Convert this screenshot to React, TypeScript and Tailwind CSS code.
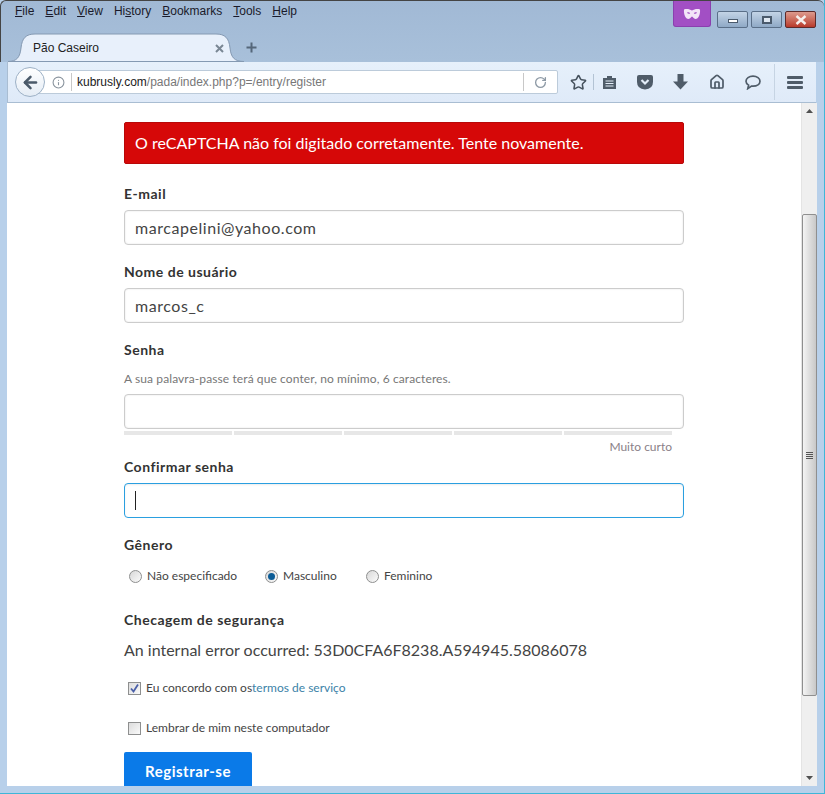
import { ArrowLeft, Info, RotateCw, Star, House } from "lucide-react";

const menu = [
  ["F", "ile"],
  ["E", "dit"],
  ["V", "iew"],
  ["Hi", "story", "s"],
  ["B", "ookmarks"],
  ["T", "ools"],
  ["H", "elp"],
];

function MenuItem({ item }: { item: string[] }) {
  if (item.length === 3) {
    return (
      <span>
        Hi<span className="underline">s</span>tory
      </span>
    );
  }
  return (
    <span>
      <span className="underline">{item[0]}</span>
      {item[1]}
    </span>
  );
}

function Label({ children }: { children: React.ReactNode }) {
  return <div className="text-[14px] leading-[20px] font-bold tracking-[0.5px] text-[#333]">{children}</div>;
}

function Field({ value, focused }: { value?: string; focused?: boolean }) {
  return (
    <div
      className={
        "h-[35px] rounded-[4px] border bg-white px-[10px] text-[16px] leading-[33px] tracking-[0.55px] text-[#444] " +
        (focused ? "border-[#2a9fe0] shadow-[inset_0_1px_2px_rgba(0,0,0,0.08)]" : "border-[#ccc] shadow-[inset_0_0_2px_rgba(0,0,0,0.12)]")
      }
    >
      {value}
      {focused && <span className="mt-[7px] block h-[19px] w-px bg-[#222]" />}
    </div>
  );
}

function Radio({ checked, label, width }: { checked?: boolean; label: string; width: string }) {
  return (
    <div className={"flex items-center " + width}>
      <span
        className={
          "flex h-[13px] w-[13px] items-center justify-center rounded-full border border-[#8e8f8f] bg-gradient-to-br from-[#d8d8d8] to-[#fbfbfb]"
        }
      >
        {checked && <span className="h-[7px] w-[7px] rounded-full bg-[#0c5c96]" />}
      </span>
      <span className="ml-[5px] text-[12px] leading-[16px] text-[#444]">{label}</span>
    </div>
  );
}

function Checkbox({ checked }: { checked?: boolean }) {
  return (
    <span className="flex h-[13px] w-[13px] items-center justify-center border border-[#8e8f8f] bg-gradient-to-br from-[#dcdcdc] to-[#fafafa]">
      {checked && (
        <svg width="11" height="11" viewBox="0 0 11 11">
          <path d="M2 5.5 L4.5 8.5 L9 1.5" fill="none" stroke="#4a5fa8" strokeWidth="1.8" />
        </svg>
      )}
    </span>
  );
}

export default function App() {
  return (
    <div className="flex h-[794px] w-[825px] flex-col overflow-hidden bg-[#b8d0ea] font-['Lato',sans-serif] border-r border-b border-[#3fb6d8]">
      {/* title + menu */}
      <div className="relative h-[62px] shrink-0 rounded-t-[6px] bg-gradient-to-b from-[#a1b9d5] to-[#a8c0da] border-t border-l border-[#444]">
        <div className="flex gap-[11px] pl-[14px] pt-[1px] font-['Liberation_Sans',sans-serif] text-[12px] leading-[18px] text-[#1a1a2a]">
          {menu.map((m) => (
            <MenuItem key={m[0]} item={m} />
          ))}
        </div>
        <div className="absolute right-[8px] top-0 flex items-start">
          <div className="mr-[6px] flex h-[26px] w-[38px] items-center justify-center rounded-b-[3px] bg-[#a24fc4] border border-t-0 border-[#8a3fae]">
            <svg width="18" height="12" viewBox="0 0 18 12">
              <path
                d="M1 1.5 C4 0.5 7 1.5 9 2.5 C11 1.5 14 0.5 17 1.5 C17.5 6 15.5 11 12.5 11 C10.5 11 10 8.5 9 8.5 C8 8.5 7.5 11 5.5 11 C2.5 11 0.5 6 1 1.5 Z M4 4.8 C5 4 6.5 4.2 7.2 5.4 C6 6 4.8 5.8 4 4.8 Z M14 4.8 C13 4 11.5 4.2 10.8 5.4 C12 6 13.2 5.8 14 4.8 Z"
                fill="#f3e4f8"
                fillRule="evenodd"
              />
            </svg>
          </div>
          <div className="mt-[10px] flex gap-[3px]">
            <div className="flex h-[17px] w-[31px] items-center justify-center rounded-[2px] border border-[#5a6f88] bg-gradient-to-b from-[#c3d4e6] to-[#8fa9c6]">
              <span className="mt-[3px] h-[4px] w-[10px] border border-[#4a5a6c] bg-white" />
            </div>
            <div className="flex h-[17px] w-[31px] items-center justify-center rounded-[2px] border border-[#5a6f88] bg-gradient-to-b from-[#c3d4e6] to-[#8fa9c6]">
              <span className="h-[8px] w-[10px] border-2 border-[#4a5a6c] bg-[#dfe8f2]" />
            </div>
            <div className="flex h-[17px] w-[31px] items-center justify-center rounded-[2px] border border-[#5d2a2a] bg-gradient-to-b from-[#dc9a8e] to-[#b8382a]">
              <svg width="12" height="10" viewBox="0 0 12 10">
                <path d="M1.5 1 L10.5 9 M10.5 1 L1.5 9" stroke="#f6f0ee" strokeWidth="2.4" />
              </svg>
            </div>
          </div>
        </div>
        {/* tab strip */}
        <div className="absolute bottom-0 left-[7px] flex h-[29px] items-center">
          <div className="relative flex h-[29px] w-[236px] items-center">
            <svg className="absolute inset-0" width="236" height="29" viewBox="0 0 236 29">
              <path
                d="M0 28.5 C9 28.5 12 24 13 15 C14 5 18 1 27 1 L208 1 C217 1 221 5 222 15 C223 24 226 28.5 236 28.5 Z"
                fill="#e8f0fb"
                stroke="#8499b2"
              />
            </svg>
            <span className="relative ml-[25px] font-['Liberation_Sans',sans-serif] text-[12px] text-[#222]">Pão Caseiro</span>
            <svg className="absolute left-[207px] top-[11px]" width="9" height="9" viewBox="0 0 9 9">
              <path d="M1 1 L8 8 M8 1 L1 8" stroke="#7a8794" strokeWidth="2" />
            </svg>
          </div>
          <svg className="ml-[2px]" width="11" height="11" viewBox="0 0 11 11">
            <path d="M5.5 0.5 V10.5 M0.5 5.5 H10.5" stroke="#55677a" strokeWidth="2" />
          </svg>
        </div>
      </div>

      {/* nav bar */}
      <div className="relative flex h-[41px] shrink-0 items-center border-b border-[#a9bdd2] border-l border-[#a8c0da] bg-gradient-to-b from-[#e6f0fb] to-[#dfeaf8] ml-[7px] mr-[8px] pl-[23px]">
        <div className="absolute left-[7px] top-[5px] flex h-[30px] w-[30px] items-center justify-center rounded-full border border-[#9db1c6] bg-gradient-to-b from-white to-[#e4ecf5]">
          <ArrowLeft size={19} strokeWidth={3.2} className="text-[#4a5a6a]" />
        </div>
        <div className="flex h-[24px] w-[527px] items-center rounded-r-[2px] border border-[#bccbda] bg-white pl-[20px]">
          <Info size={13} className="text-[#8a949e]" />
          <span className="ml-[6px] h-[18px] w-px bg-[#c8c8c8]" />
          <span className="ml-[5px] font-['Liberation_Sans',sans-serif] text-[12px] text-[#1a1a1a]">
            kubrusly.com<span className="text-[#777]">/pada/index.php?p=/entry/register</span>
          </span>
          <span className="ml-auto h-[18px] w-px bg-[#c8c8c8]" />
          <RotateCw size={13} strokeWidth={2.4} className="mx-[10px] text-[#8d99a5]" />
        </div>
        <Star size={17} strokeWidth={2.2} className="ml-[12px] text-[#46525e]" />
        <span className="ml-[6px] h-[16px] w-px bg-[#b3c3d4]" />
        <svg className="ml-[8px]" width="15" height="15" viewBox="0 0 15 15">
          <path d="M1 3 H5 V1 H10 V3 H14 V14 H1 Z" fill="#4f5c69" />
          <path d="M3.5 6 H11.5 M3.5 8.5 H11.5 M3.5 11 H11.5" stroke="#e3edf8" strokeWidth="1" />
        </svg>
        <svg className="ml-[20px]" width="16" height="15" viewBox="0 0 16 15">
          <path d="M0 2 Q0 0 2 0 H14 Q16 0 16 2 V7 Q16 14 8 14.5 Q0 14 0 7 Z" fill="#4f5c69" />
          <path d="M4.5 5 L8 8.5 L11.5 5" fill="none" stroke="#e3edf8" strokeWidth="2.2" />
        </svg>
        <svg className="ml-[20px]" width="15" height="16" viewBox="0 0 15 16">
          <path d="M4.5 0 H10.5 V7.5 H15 L7.5 15.5 L0 7.5 H4.5 Z" fill="#4f5c69" />
        </svg>
        <House size={16} strokeWidth={2.6} className="ml-[21px] text-[#4f5c69]" />
        <svg className="ml-[20px]" width="16" height="15" viewBox="0 0 16 15">
          <path d="M8 1.2 C12 1.2 15 3.4 15 6.3 C15 9.2 12 11.2 8 11.2 L6.5 11.1 L2.8 13.6 L3.6 10.2 C2 9.3 1 7.9 1 6.3 C1 3.4 4 1.2 8 1.2 Z" fill="none" stroke="#4f5c69" strokeWidth="1.7" />
        </svg>
        <span className="ml-[13px] h-[36px] w-px bg-[#c6d4e3]" />
        <span className="ml-[12px] flex w-[16px] flex-col gap-[2px]">
          <span className="h-[3px] rounded-[1px] bg-[#4f5c69]" />
          <span className="h-[3px] rounded-[1px] bg-[#4f5c69]" />
          <span className="h-[3px] rounded-[1px] bg-[#4f5c69]" />
        </span>
      </div>

      {/* page + scrollbar */}
      <div className="ml-[7px] mr-[7px] flex h-[683px] shrink-0">
        <div className="w-[794px] overflow-hidden bg-white pl-[117px] pt-[19px]">
          <div className="w-[560px]">
            <div className="flex h-[42px] items-center rounded-[2px] border border-[#b80808] bg-[#d60808] px-[10px] text-[16px] text-white">
              O reCAPTCHA não foi digitado corretamente. Tente novamente.
            </div>

            <div className="mt-[20px] mb-[6px]">
              <Label>E-mail</Label>
            </div>
            <Field value="marcapelini@yahoo.com" />

            <div className="mt-[17px] mb-[6px]">
              <Label>Nome de usuário</Label>
            </div>
            <Field value="marcos_c" />

            <div className="mt-[17px]">
              <Label>Senha</Label>
            </div>
            <div className="mt-[9px] mb-[5px] text-[12px] leading-[20px] tracking-[0.1px] text-[#777]">
              A sua palavra-passe terá que conter, no mínimo, 6 caracteres.
            </div>
            <Field />
            <div className="mt-[2px] flex w-[548px] gap-[2px]">
              <span className="h-[4px] flex-1 bg-[#e7e7e7]" />
              <span className="h-[4px] flex-1 bg-[#e7e7e7]" />
              <span className="h-[4px] flex-1 bg-[#e7e7e7]" />
              <span className="h-[4px] flex-1 bg-[#e7e7e7]" />
              <span className="h-[4px] flex-1 bg-[#e7e7e7]" />
            </div>
            <div className="w-[548px] pt-[3px] text-right text-[12px] leading-[18px] text-[#8a7f88]">Muito curto</div>

            <div className="mt-[1px] mb-[6px]">
              <Label>Confirmar senha</Label>
            </div>
            <Field focused />

            <div className="mt-[17px]">
              <Label>Gênero</Label>
            </div>
            <div className="mt-[13px] flex pl-[5px]">
              <Radio label="Não especificado" width="w-[136px]" />
              <Radio checked label="Masculino" width="w-[101px]" />
              <Radio label="Feminino" width="w-[90px]" />
            </div>

            <div className="mt-[26px]">
              <Label>Checagem de segurança</Label>
            </div>
            <div className="mt-[8px] text-[16px] leading-[24px] text-[#444]">
              An internal error occurred: 53D0CFA6F8238.A594945.58086078
            </div>

            <div className="mt-[17px] flex items-center pl-[4px]">
              <Checkbox checked />
              <span className="ml-[5px] text-[12px] leading-[18px] text-[#444]">
                Eu concordo com os<span className="text-[#3b82a8]">termos de serviço</span>
              </span>
            </div>
            <div className="mt-[22px] flex items-center pl-[4px]">
              <Checkbox />
              <span className="ml-[5px] text-[12px] leading-[18px] text-[#444]">Lembrar de mim neste computador</span>
            </div>

            <div className="mt-[15px] flex h-[40px] w-[128px] justify-center rounded-[2px] bg-[#0a7ae8] pt-[8px] text-[15px] font-bold tracking-[0.5px] text-white">
              Registrar-se
            </div>
          </div>
        </div>

        {/* scrollbar */}
        <div className="relative w-[16px] bg-[#efefef] border-l border-[#e4e4e4]">
          <svg className="absolute left-[4px] top-[6px]" width="7" height="4" viewBox="0 0 7 4">
            <path d="M3.5 0 L7 4 H0 Z" fill="#505050" />
          </svg>
          <div className="absolute left-0 top-[111px] flex h-[482px] w-[15px] items-center justify-center rounded-[2px] border border-[#8f8f8f] bg-gradient-to-r from-[#f4f4f4] to-[#c8c8c8]">
            <span className="flex w-[7px] flex-col gap-[1px]">
              <span className="h-px bg-[#555]" />
              <span className="h-px bg-[#555]" />
              <span className="h-px bg-[#555]" />
              <span className="h-px bg-[#555]" />
            </span>
          </div>
          <svg className="absolute bottom-[6px] left-[4px]" width="7" height="4" viewBox="0 0 7 4">
            <path d="M0 0 H7 L3.5 4 Z" fill="#505050" />
          </svg>
        </div>
      </div>
    </div>
  );
}
